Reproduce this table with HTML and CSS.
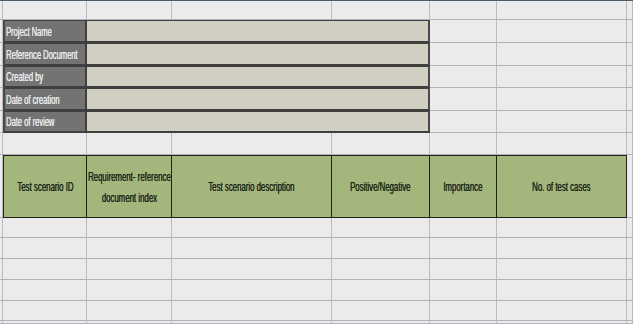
FILE: index.html
```html
<!DOCTYPE html>
<html>
<head>
<meta charset="utf-8">
<link rel="stylesheet" href="styles.css">
</head>
<body>
<div class="topbar"></div>
<div class="sheet">
  <div class="c"></div><div class="c"></div><div class="c"></div><div class="c"></div><div class="c"></div><div class="c"></div><div class="c"></div><div class="c"></div>

  <div class="c"></div><div class="lbl"><span>Project Name</span></div><div class="val"></div><div class="c"></div><div class="c"></div><div class="c"></div>
  <div class="c"></div><div class="lbl"><span>Reference Document</span></div><div class="val"></div><div class="c"></div><div class="c"></div><div class="c"></div>
  <div class="c"></div><div class="lbl"><span>Created by</span></div><div class="val"></div><div class="c"></div><div class="c"></div><div class="c"></div>
  <div class="c"></div><div class="lbl"><span>Date of creation</span></div><div class="val"></div><div class="c"></div><div class="c"></div><div class="c"></div>
  <div class="c"></div><div class="lbl"><span>Date of review</span></div><div class="val"></div><div class="c"></div><div class="c"></div><div class="c"></div>

  <div class="c"></div><div class="c"></div><div class="c"></div><div class="c"></div><div class="c"></div><div class="c"></div><div class="c"></div><div class="c"></div>

  <div class="c"></div>
  <div class="hdr hdr-first"><span>Test scenario ID</span></div>
  <div class="hdr"><span>Requirement- reference<br>document index</span></div>
  <div class="hdr"><span>Test scenario description</span></div>
  <div class="hdr"><span>Positive/Negative</span></div>
  <div class="hdr"><span>Importance</span></div>
  <div class="hdr"><span>No. of test cases</span></div>
  <div class="c"></div>

  <div class="c"></div><div class="c"></div><div class="c"></div><div class="c"></div><div class="c"></div><div class="c"></div><div class="c"></div><div class="c"></div>
  <div class="c"></div><div class="c"></div><div class="c"></div><div class="c"></div><div class="c"></div><div class="c"></div><div class="c"></div><div class="c"></div>
  <div class="c"></div><div class="c"></div><div class="c"></div><div class="c"></div><div class="c"></div><div class="c"></div><div class="c"></div><div class="c"></div>
  <div class="c"></div><div class="c"></div><div class="c"></div><div class="c"></div><div class="c"></div><div class="c"></div><div class="c"></div><div class="c"></div>
  <div class="c"></div><div class="c"></div><div class="c"></div><div class="c"></div><div class="c"></div><div class="c"></div><div class="c"></div><div class="c"></div>
  <div class="c"></div><div class="c"></div><div class="c"></div><div class="c"></div><div class="c"></div><div class="c"></div><div class="c"></div><div class="c"></div>
</div>
</body>
</html>
```
FILE: styles.css
```css
html, body {
  margin: 0;
  padding: 0;
  background: #ebebeb;
  width: 633px;
  height: 324px;
  overflow: hidden;
  font-family: "Liberation Sans", Arial, sans-serif;
}

.topbar {
  height: 1px;
  background: #4b5c68;
}

.sheet {
  display: grid;
  grid-template-columns: 3px 84px 85px 160px 98px 67px 130px 6px;
  grid-template-rows: 19px 23px 23px 22px 23px 22px 22px 63px 20px 21px 21px 21px 20px 3px;
  background: #ebebeb;
}

.c {
  box-sizing: border-box;
  border-right: 1px solid #bababf;
  border-bottom: 1px solid #b2b2bc;
}

.lbl {
  box-sizing: border-box;
  background: #737373;
  border-top: 1px solid #3f3f3f;
  border-left: 2px solid #4a4a4a;
  border-bottom: 2px solid #3f3f3f;
  border-right: 2px solid #3f3f3f;
  display: flex;
  align-items: center;
  padding-left: 1px;
  overflow: visible;
}

.lbl span {
  display: inline-block;
  white-space: nowrap;
  font-size: 13.5px;
  color: #e9e9e9;
  transform: scaleX(0.56);
  transform-origin: left center;
  text-shadow: 0.4px 0 0 #e9e9e9;
}

.val {
  grid-column: span 3;
  box-sizing: border-box;
  background: #d1cfc2;
  border-top: 1px solid #3f3f3f;
  border-bottom: 2px solid #3f3f3f;
  border-right: 2px solid #4a4a4a;
}

.hdr {
  box-sizing: border-box;
  background: #a3b77d;
  border-top: 1px solid #1c2414;
  border-bottom: 1px solid #1c2414;
  border-right: 1px solid #1c2414;
  display: flex;
  align-items: center;
  justify-content: center;
  text-align: center;
}

.hdr-first {
  border-left: 1px solid #1c2414;
}

.hdr span {
  display: inline-block;
  white-space: nowrap;
  font-size: 13.5px;
  line-height: 21px;
  color: #1f2818;
  transform: scaleX(0.58);
  transform-origin: center center;
  text-shadow: 0.4px 0 0 #1f2818;
}
```
